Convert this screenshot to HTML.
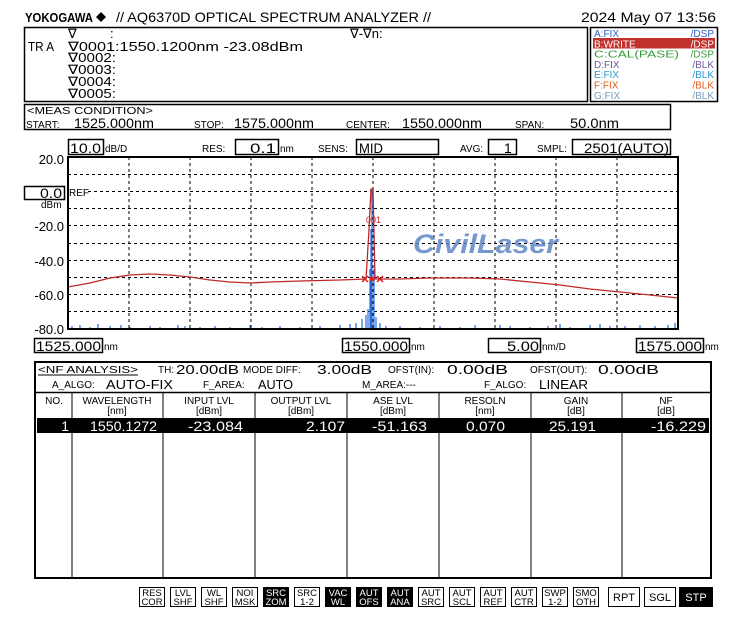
<!DOCTYPE html>
<html><head><meta charset="utf-8"><style>
html,body{margin:0;padding:0;background:#fff;}
svg{display:block;font-family:"Liberation Sans",sans-serif;}
</style></head><body>
<svg width="733" height="624" viewBox="0 0 733 624" xmlns="http://www.w3.org/2000/svg">
<rect width="733" height="624" fill="#fff"/>
<text x="25" y="22" font-size="13" font-weight="bold" textLength="68" lengthAdjust="spacingAndGlyphs">YOKOGAWA</text>
<path d="M101 12 L106 17 L101 22 L96 17 Z" fill="#000"/>
<text x="116" y="22" font-size="14" textLength="315" lengthAdjust="spacingAndGlyphs">// AQ6370D OPTICAL SPECTRUM ANALYZER //</text>
<text x="581" y="22" font-size="14" textLength="135" lengthAdjust="spacingAndGlyphs">2024 May 07 13:56</text>
<rect x="24.5" y="27.5" width="563" height="74" fill="none" stroke="#000" stroke-width="1.5"/>
<g font-size="13">
<text x="68" y="38">∇</text><text x="110" y="38">:</text>
<text x="350" y="38">∇-∇n:</text>
<text x="28" y="51" textLength="26" lengthAdjust="spacingAndGlyphs">TR A</text>
<text x="68" y="51" textLength="235" lengthAdjust="spacingAndGlyphs">∇0001:1550.1200nm    -23.08dBm</text>
<text x="68" y="62" textLength="48" lengthAdjust="spacingAndGlyphs">∇0002:</text>
<text x="68" y="74" textLength="48" lengthAdjust="spacingAndGlyphs">∇0003:</text>
<text x="68" y="86" textLength="48" lengthAdjust="spacingAndGlyphs">∇0004:</text>
<text x="68" y="98" textLength="48" lengthAdjust="spacingAndGlyphs">∇0005:</text>
</g>
<rect x="590.5" y="27.5" width="127" height="74" fill="none" stroke="#000" stroke-width="1.5"/>
<rect x="593" y="38" width="122" height="10.5" fill="#c0302c"/>
<g font-size="10">
<text x="594" y="37" fill="#2a62c8">A:FIX</text><text x="714" y="37" fill="#2a62c8" text-anchor="end">/DSP</text>
<text x="594" y="47.3" fill="#fff">B:WRITE</text><text x="714" y="47.3" fill="#fff" text-anchor="end">/DSP</text>
<text x="594" y="57.6" fill="#3a9a3a" textLength="85" lengthAdjust="spacingAndGlyphs">C:CAL(PASE)</text><text x="714" y="57.6" fill="#3a9a3a" text-anchor="end">/DSP</text>
<text x="594" y="67.9" fill="#6a5a9a">D:FIX</text><text x="714" y="67.9" fill="#6a5a9a" text-anchor="end">/BLK</text>
<text x="594" y="78.2" fill="#2a9ac8">E:FIX</text><text x="714" y="78.2" fill="#2a9ac8" text-anchor="end">/BLK</text>
<text x="594" y="88.5" fill="#e05a20">F:FIX</text><text x="714" y="88.5" fill="#e05a20" text-anchor="end">/BLK</text>
<text x="594" y="98.8" fill="#7a9ab8">G:FIX</text><text x="714" y="98.8" fill="#7a9ab8" text-anchor="end">/BLK</text>
</g>
<rect x="24.5" y="104.5" width="646" height="25" fill="none" stroke="#000" stroke-width="1.5"/>
<text x="27" y="114" font-size="10" textLength="126" lengthAdjust="spacingAndGlyphs">&lt;MEAS CONDITION&gt;</text>
<text x="26" y="128" font-size="10">START:</text><text x="74" y="128" font-size="14" textLength="80" lengthAdjust="spacingAndGlyphs">1525.000nm</text>
<text x="194" y="128" font-size="10">STOP:</text><text x="234" y="128" font-size="14" textLength="80" lengthAdjust="spacingAndGlyphs">1575.000nm</text>
<text x="346" y="128" font-size="10">CENTER:</text><text x="402" y="128" font-size="14" textLength="80" lengthAdjust="spacingAndGlyphs">1550.000nm</text>
<text x="515" y="128" font-size="10">SPAN:</text><text x="570" y="128" font-size="14" textLength="49" lengthAdjust="spacingAndGlyphs">50.0nm</text>
<g fill="none" stroke="#000" stroke-width="1.5">
<rect x="68.5" y="139.5" width="35" height="15"/>
<rect x="235.5" y="139.5" width="43" height="15"/>
<rect x="356.5" y="139.5" width="82" height="15"/>
<rect x="488.5" y="139.5" width="28" height="15"/>
<rect x="572.5" y="139.5" width="98" height="15"/>
<rect x="24.5" y="186.5" width="40" height="13"/>
</g>
<g font-size="14">
<text x="70" y="153" textLength="31" lengthAdjust="spacingAndGlyphs">10.0</text>
<text x="250" y="153" textLength="26" lengthAdjust="spacingAndGlyphs">0.1</text>
<text x="359" y="153" textLength="24" lengthAdjust="spacingAndGlyphs">MID</text>
<text x="504" y="153">1</text>
<text x="584" y="153" textLength="85" lengthAdjust="spacingAndGlyphs">2501(AUTO)</text>
<text x="40" y="198" textLength="22" lengthAdjust="spacingAndGlyphs">0.0</text>
</g>
<g font-size="10">
<text x="105" y="152">dB/D</text>
<text x="202" y="152">RES:</text><text x="280" y="152">nm</text>
<text x="318" y="152">SENS:</text>
<text x="460" y="152">AVG:</text>
<text x="537" y="152">SMPL:</text>
<text x="69" y="196">REF</text>
<text x="41" y="208">dBm</text>
</g>
<g font-size="13" text-anchor="end">
<text x="64" y="164">20.0</text>
<text x="64" y="231">-20.0</text>
<text x="64" y="266">-40.0</text>
<text x="64" y="300">-60.0</text>
<text x="64" y="334">-80.0</text>
</g>
<g stroke="#000" stroke-width="1" stroke-dasharray="3,3">
<line x1="129" y1="157" x2="129" y2="329"/><line x1="190" y1="157" x2="190" y2="329"/>
<line x1="251" y1="157" x2="251" y2="329"/><line x1="312" y1="157" x2="312" y2="329"/>
<line x1="373" y1="157" x2="373" y2="329"/><line x1="434" y1="157" x2="434" y2="329"/>
<line x1="495" y1="157" x2="495" y2="329"/><line x1="556" y1="157" x2="556" y2="329"/>
<line x1="617" y1="157" x2="617" y2="329"/>
<line x1="68" y1="174.5" x2="678" y2="174.5"/><line x1="88" y1="191.5" x2="678" y2="191.5"/>
<line x1="68" y1="208.5" x2="678" y2="208.5"/><line x1="68" y1="225.5" x2="678" y2="225.5"/>
<line x1="68" y1="243.5" x2="678" y2="243.5"/><line x1="68" y1="260.5" x2="678" y2="260.5"/>
<line x1="68" y1="277.5" x2="678" y2="277.5"/><line x1="68" y1="294.5" x2="678" y2="294.5"/>
<line x1="68" y1="311.5" x2="678" y2="311.5"/>
</g>
<text x="413" y="253" font-size="27" font-weight="bold" font-style="italic" fill="#5f87c4" opacity="0.85" textLength="145" lengthAdjust="spacingAndGlyphs">CivilLaser</text>
<path d="M72 329v-3M80 329v-4M90 329v-2M98 329v-5M110 329v-3M121 329v-4M130 329v-2M150 329v-3M160 329v-2M178 329v-4M185 329v-3M200 329v-2M215 329v-3M230 329v-2M250 329v-4M262 329v-2M280 329v-3M300 329v-2M320 329v-3M340 329v-4M350 329v-5M356 329v-6M362 329v-10M366 329v-14M368 329v-20M370 329v-60M371 329v-100M372 329v-140M374 329v-60M376 329v-12M380 329v-6M386 329v-3M400 329v-3M420 329v-2M440 329v-3M460 329v-2M475 329v-4M500 329v-4M510 329v-3M530 329v-2M548 329v-3M560 329v-5M570 329v-2M590 329v-4M600 329v-5M610 329v-3M625 329v-3M640 329v-4M655 329v-3M668 329v-4M675 329v-6" stroke="#2a6ad8" stroke-width="1.2" fill="none"/>
<polyline points="68,287 90,283 110,278 130,275 150,274 170,275 190,277 210,280 230,282 250,283 270,282 300,281 340,280 366,279 369,230 371,189 373,189 375,279 400,279 430,278 470,278 500,279 530,282 560,285 590,289 620,292 650,295 678,298" fill="none" stroke="#c02828" stroke-width="1.3"/>
<g stroke="#e02020" stroke-width="1.5">
<path d="M362 276l6 6M368 276l-6 6M377 276l6 6M383 276l-6 6"/>
</g>
<circle cx="372" cy="279" r="2.5" fill="#e02020"/>
<text x="366" y="223" font-size="9" fill="#d02020">001</text>
<rect x="68" y="157" width="610" height="172" fill="none" stroke="#000" stroke-width="2"/>
<g fill="none" stroke="#000" stroke-width="1.5">
<rect x="34.5" y="338.5" width="68" height="14"/>
<rect x="342.5" y="338.5" width="67" height="14"/>
<rect x="488.5" y="338.5" width="52" height="14"/>
<rect x="636.5" y="338.5" width="67" height="14"/>
</g>
<g font-size="14">
<text x="36" y="351" textLength="65" lengthAdjust="spacingAndGlyphs">1525.000</text>
<text x="344" y="351" textLength="64" lengthAdjust="spacingAndGlyphs">1550.000</text>
<text x="507" y="351" textLength="32" lengthAdjust="spacingAndGlyphs">5.00</text>
<text x="638" y="351" textLength="64" lengthAdjust="spacingAndGlyphs">1575.000</text>
</g>
<g font-size="10">
<text x="104" y="350">nm</text><text x="411" y="350">nm</text><text x="542" y="350">nm/D</text><text x="705" y="350">nm</text>
</g>
<rect x="35" y="362" width="676" height="216" fill="none" stroke="#000" stroke-width="2"/>
<g font-size="10">
<text x="38" y="373" textLength="100" lengthAdjust="spacingAndGlyphs">&lt;NF ANALYSIS&gt;</text>
<line x1="38" y1="375" x2="138" y2="375" stroke="#000"/>
<text x="158" y="373">TH:</text><text x="243" y="373">MODE DIFF:</text><text x="388" y="373">OFST(IN):</text><text x="530" y="373">OFST(OUT):</text>
<text x="52" y="388">A_ALGO:</text><text x="203" y="388">F_AREA:</text><text x="362" y="388">M_AREA:---</text><text x="484" y="388">F_ALGO:</text>
</g>
<g font-size="13">
<text x="176" y="374" textLength="63" lengthAdjust="spacingAndGlyphs">20.00dB</text>
<text x="317" y="374" textLength="55" lengthAdjust="spacingAndGlyphs">3.00dB</text>
<text x="447" y="374" textLength="61" lengthAdjust="spacingAndGlyphs">0.00dB</text>
<text x="598" y="374" textLength="61" lengthAdjust="spacingAndGlyphs">0.00dB</text>
<text x="106" y="389" textLength="67" lengthAdjust="spacingAndGlyphs">AUTO-FIX</text>
<text x="258" y="389" textLength="35" lengthAdjust="spacingAndGlyphs">AUTO</text>
<text x="539" y="389" textLength="49" lengthAdjust="spacingAndGlyphs">LINEAR</text>
</g>
<line x1="35" y1="392.5" x2="711" y2="392.5" stroke="#000" stroke-width="1.5"/>
<rect x="37" y="418" width="672" height="15" fill="#000"/>
<g stroke="#000" stroke-width="1">
<line x1="72" y1="393" x2="72" y2="578"/><line x1="163" y1="393" x2="163" y2="578"/>
<line x1="255" y1="393" x2="255" y2="578"/><line x1="347" y1="393" x2="347" y2="578"/>
<line x1="439" y1="393" x2="439" y2="578"/><line x1="531" y1="393" x2="531" y2="578"/>
<line x1="622" y1="393" x2="622" y2="578"/>
</g>
<g font-size="10" text-anchor="middle">
<text x="54" y="404">NO.</text>
<text x="117" y="404">WAVELENGTH</text><text x="117" y="414">[nm]</text>
<text x="209" y="404">INPUT LVL</text><text x="209" y="414">[dBm]</text>
<text x="301" y="404">OUTPUT LVL</text><text x="301" y="414">[dBm]</text>
<text x="393" y="404">ASE LVL</text><text x="393" y="414">[dBm]</text>
<text x="485" y="404">RESOLN</text><text x="485" y="414">[nm]</text>
<text x="576" y="404">GAIN</text><text x="576" y="414">[dB]</text>
<text x="666" y="404">NF</text><text x="666" y="414">[dB]</text>
</g>
<g font-size="14" fill="#fff" text-anchor="end">
<text x="69" y="431">1</text>
<text x="157" y="431" textLength="67" lengthAdjust="spacingAndGlyphs">1550.1272</text>
<text x="243" y="431" textLength="55" lengthAdjust="spacingAndGlyphs">-23.084</text>
<text x="345" y="431" textLength="39" lengthAdjust="spacingAndGlyphs">2.107</text>
<text x="427" y="431" textLength="55" lengthAdjust="spacingAndGlyphs">-51.163</text>
<text x="505" y="431" textLength="39" lengthAdjust="spacingAndGlyphs">0.070</text>
<text x="596" y="431" textLength="47" lengthAdjust="spacingAndGlyphs">25.191</text>
<text x="706" y="431" textLength="55" lengthAdjust="spacingAndGlyphs">-16.229</text>
</g>
<g font-size="9.5" text-anchor="middle">
<g><rect x="139.5" y="587.5" width="25" height="19" fill="#fff" stroke="#000"/><text x="152" y="596">RES</text><text x="152" y="605">COR</text></g>
<g><rect x="170.5" y="587.5" width="25" height="19" fill="#fff" stroke="#000"/><text x="183" y="596">LVL</text><text x="183" y="605">SHF</text></g>
<g><rect x="201.5" y="587.5" width="25" height="19" fill="#fff" stroke="#000"/><text x="214" y="596">WL</text><text x="214" y="605">SHF</text></g>
<g><rect x="232.5" y="587.5" width="25" height="19" fill="#fff" stroke="#000"/><text x="245" y="596">NOI</text><text x="245" y="605">MSK</text></g>
<g><rect x="263.5" y="587.5" width="25" height="19" fill="#000" stroke="#000"/><text x="276" y="596" fill="#fff">SRC</text><text x="276" y="605" fill="#fff">ZOM</text></g>
<g><rect x="294.5" y="587.5" width="25" height="19" fill="#fff" stroke="#000"/><text x="307" y="596">SRC</text><text x="307" y="605">1-2</text></g>
<g><rect x="325.5" y="587.5" width="25" height="19" fill="#000" stroke="#000"/><text x="338" y="596" fill="#fff">VAC</text><text x="338" y="605" fill="#fff">WL</text></g>
<g><rect x="356.5" y="587.5" width="25" height="19" fill="#000" stroke="#000"/><text x="369" y="596" fill="#fff">AUT</text><text x="369" y="605" fill="#fff">OFS</text></g>
<g><rect x="387.5" y="587.5" width="25" height="19" fill="#000" stroke="#000"/><text x="400" y="596" fill="#fff">AUT</text><text x="400" y="605" fill="#fff">ANA</text></g>
<g><rect x="418.5" y="587.5" width="25" height="19" fill="#fff" stroke="#000"/><text x="431" y="596">AUT</text><text x="431" y="605">SRC</text></g>
<g><rect x="449.5" y="587.5" width="25" height="19" fill="#fff" stroke="#000"/><text x="462" y="596">AUT</text><text x="462" y="605">SCL</text></g>
<g><rect x="480.5" y="587.5" width="25" height="19" fill="#fff" stroke="#000"/><text x="493" y="596">AUT</text><text x="493" y="605">REF</text></g>
<g><rect x="511.5" y="587.5" width="25" height="19" fill="#fff" stroke="#000"/><text x="524" y="596">AUT</text><text x="524" y="605">CTR</text></g>
<g><rect x="542.5" y="587.5" width="25" height="19" fill="#fff" stroke="#000"/><text x="555" y="596">SWP</text><text x="555" y="605">1-2</text></g>
<g><rect x="573.5" y="587.5" width="25" height="19" fill="#fff" stroke="#000"/><text x="586" y="596">SMO</text><text x="586" y="605">OTH</text></g>
</g>
<g font-size="11" text-anchor="middle">
<rect x="608.5" y="587.5" width="31" height="19" fill="#fff" stroke="#000"/><text x="624" y="601">RPT</text>
<rect x="644.5" y="587.5" width="31" height="19" fill="#fff" stroke="#000"/><text x="660" y="601">SGL</text>
<rect x="679.5" y="587.5" width="33" height="19" fill="#000" stroke="#000"/><text x="696" y="601" fill="#fff">STP</text>
</g>
</svg>
</body></html>
